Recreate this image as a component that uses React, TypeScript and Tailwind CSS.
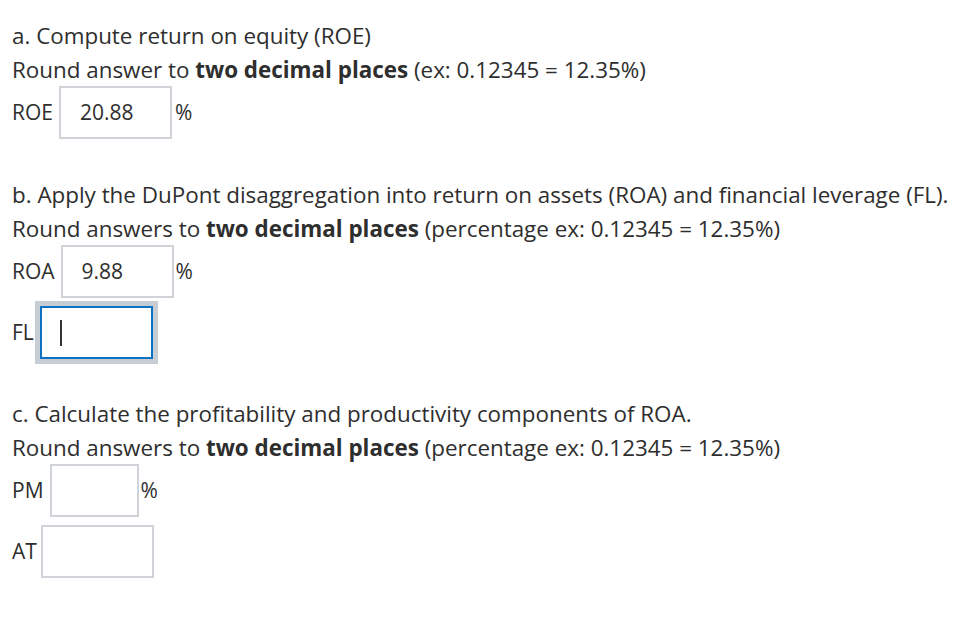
import React from "react";

const txt = "text-[22.4px] leading-[34px] text-[#2e2e2e]";

function Box({ value, w = "w-[113px]" }: { value?: string; w?: string }) {
  return (
    <div
      className={`${w} h-[53px] border-2 border-[#d0d4d9] bg-white flex items-center pl-[19px] text-[21px] text-[#2e2e2e]`}
    >
      {value}
    </div>
  );
}

export default function App() {
  return (
    <div
      className="w-[976px] h-[623px] bg-white pl-[12px] pt-[19px]"
      style={{ fontFamily: '"Open Sans", sans-serif' }}
    >
      {/* a */}
      <p className={txt}>a. Compute return on equity (ROE)</p>
      <p className={txt}>
        Round answer to <b className="font-bold">two decimal places</b> (ex: 0.12345 = 12.35%)
      </p>
      <div className="flex items-center mt-[-1px] text-[21px] text-[#2e2e2e]">
        <span className="mr-[6px]">ROE</span>
        <Box value="20.88" />
        <span className="ml-[3px]">%</span>
      </div>

      {/* b */}
      <p className={`${txt} mt-[39px]`}>
        b. Apply the DuPont disaggregation into return on assets (ROA) and financial leverage (FL).
      </p>
      <p className={txt}>
        Round answers to <b className="font-bold">two decimal places</b> (percentage ex: 0.12345 = 12.35%)
      </p>
      <div className="flex items-center mt-[-1px] text-[21px] text-[#2e2e2e]">
        <span className="mr-[6px]">ROA</span>
        <Box value="9.88" />
        <span className="ml-[2px]">%</span>
      </div>
      <div className="flex items-center mt-[3px] text-[21px] text-[#2e2e2e]">
        <span className="mr-[1px]">FL</span>
        <div className="w-[123px] h-[63px] bg-[#c6cdd4] p-[5px]">
          <div className="w-full h-full border-2 border-[#0b72c4] bg-white flex items-center pl-[18px]">
            <span className="block w-[2px] h-[26px] bg-[#333333]" />
          </div>
        </div>
      </div>

      {/* c */}
      <p className={`${txt} mt-[33px]`}>c. Calculate the profitability and productivity components of ROA.</p>
      <p className={txt}>
        Round answers to <b className="font-bold">two decimal places</b> (percentage ex: 0.12345 = 12.35%)
      </p>
      <div className="flex items-center mt-[-1px] text-[21px] text-[#2e2e2e]">
        <span className="mr-[6px]">PM</span>
        <Box w="w-[89px]" />
        <span className="ml-[2px]">%</span>
      </div>
      <div className="flex items-center mt-[8px] text-[21px] text-[#2e2e2e]">
        <span className="mr-[4px]">AT</span>
        <Box w="w-[113px]" />
      </div>
    </div>
  );
}
